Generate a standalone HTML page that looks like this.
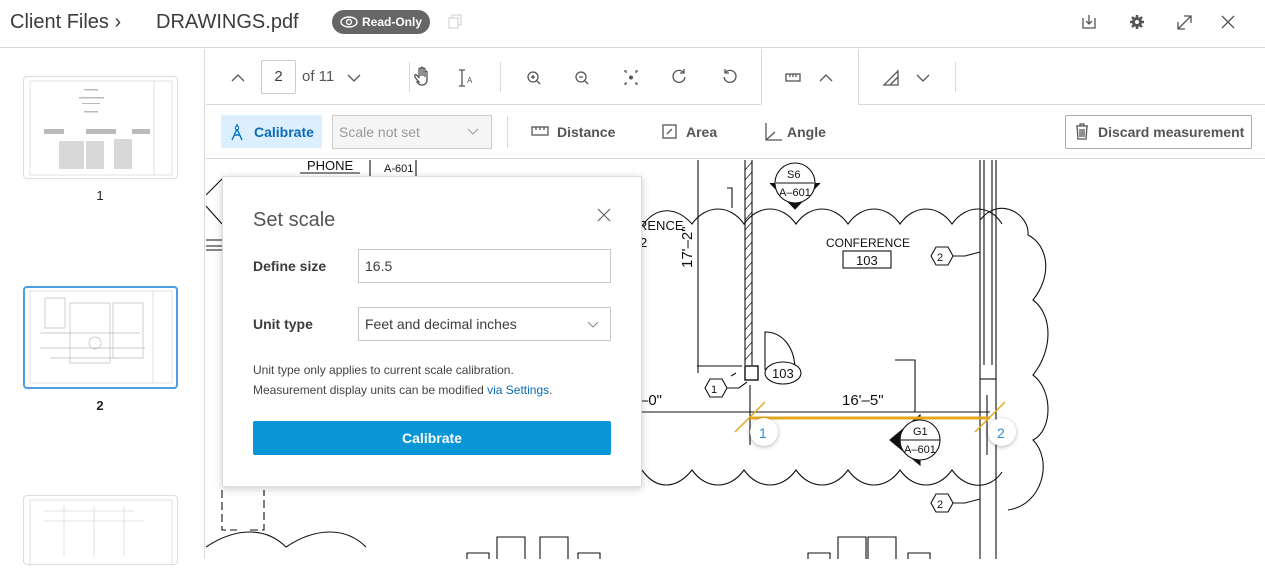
<!DOCTYPE html>
<html><head><meta charset="utf-8"><style>
*{box-sizing:border-box;margin:0;padding:0}
body{width:1265px;height:559px;overflow:hidden;background:#fff;font-family:"Liberation Sans",sans-serif;color:#3c3c3c;position:relative}
.abs{position:absolute}
.hdr{left:0;top:0;width:1265px;height:48px;border-bottom:1px solid #d9d9d9}
.t{font-size:20px;color:#3c3c3c;top:11px}
.badge{left:332px;top:10px;width:98px;height:24px;border-radius:12px;background:#666;color:#fff;font-size:12px;font-weight:bold;line-height:24px;padding-left:30px}
.side{left:0;top:49px;width:205px;height:510px;border-right:1px solid #d9d9d9}
.thumb{left:23px;width:155px;border:1px solid #ddd;border-radius:4px;background:#fff}
.lbl{font-size:13px;color:#222;width:200px;text-align:center}
.line{background:#d9d9d9}
.ic{stroke:#555;fill:none;stroke-width:1.3}
.btn{font-size:14px;font-weight:bold;color:#555;top:124px}
.dlg{left:222px;top:176px;width:420px;height:311px;background:#fff;border:1px solid #ddd;box-shadow:0 2px 8px rgba(0,0,0,.2)}
.inp{border:1px solid #c8c8c8;height:34px;font-size:14px;line-height:32px;padding-left:6px;color:#3c3c3c}
</style></head><body>
<div class="abs hdr"></div>
<div class="abs t" style="left:10px">Client Files ›</div>
<div class="abs t" style="left:156px">DRAWINGS.pdf</div>
<div class="abs badge">Read-Only</div>
<svg class="abs" style="left:340px;top:14px" width="20" height="16"><ellipse cx="9" cy="8" rx="8" ry="5" stroke="#fff" fill="none" stroke-width="1.4"/><circle cx="9" cy="8" r="2.5" fill="none" stroke="#fff" stroke-width="1.4"/></svg>
<svg class="abs" style="left:447px;top:14px" width="16" height="16"><rect x="2" y="4" width="9" height="10" stroke="#ccc" fill="none"/><path d="M5 4V1h9v10h-3" stroke="#ccc" fill="none"/></svg>
<svg class="abs" style="left:1080px;top:12px" width="170" height="22">
<path class="ic" d="M3 6v10h12V6M9 3v9M6 9l3 3 3-3"/>
<path d="M57 3v14M50 10h14M52 5l10 10M62 5L52 15" stroke="#555" stroke-width="2.5"/><circle cx="57" cy="10" r="5" fill="#555"/><circle cx="57" cy="10" r="2" fill="#fff"/>
<path class="ic" d="M98 17L111 4M104 4h7v7M98 10v7h7"/>
<path class="ic" d="M142 4l12 12M154 4l-12 12"/>
</svg>
<div class="abs side"></div>
<div class="abs thumb" style="top:76px;height:103px"><svg width="153" height="101"><g stroke="#ccc" fill="none" stroke-width=".6"><rect x="6" y="4" width="142" height="94"/><line x1="130" y1="4" x2="130" y2="98"/></g><g fill="#bbb"><rect x="60" y="12" width="14" height="1.5"/><rect x="55" y="20" width="25" height="1.5"/><rect x="58" y="26" width="18" height="1"/><rect x="60" y="34" width="14" height="1.5"/><rect x="20" y="52" width="20" height="5"/><rect x="62" y="52" width="30" height="5"/><rect x="108" y="52" width="18" height="5"/></g><g fill="#d8d8d8"><rect x="35" y="64" width="25" height="28"/><rect x="62" y="64" width="18" height="28"/><rect x="90" y="62" width="18" height="30"/></g></svg></div>
<div class="abs lbl" style="left:0;top:188px">1</div>
<div class="abs thumb" style="top:286px;height:103px;border:2px solid #4b9ee4"><svg width="151" height="99"><g stroke="#ccc" fill="none" stroke-width=".6"><rect x="5" y="3" width="142" height="92"/><line x1="128" y1="3" x2="128" y2="95"/></g><g stroke="#bbb" fill="none" stroke-width=".7"><rect x="20" y="10" width="20" height="30"/><rect x="45" y="15" width="40" height="60"/><rect x="88" y="15" width="30" height="55"/><path d="M15 45h100M15 60h105M25 70h70"/><circle cx="70" cy="55" r="6"/></g></svg></div>
<div class="abs lbl" style="left:0;top:398px;font-weight:bold">2</div>
<div class="abs thumb" style="top:495px;height:70px"><svg width="153" height="70"><g stroke="#ccc" fill="none" stroke-width=".6"><rect x="6" y="4" width="142" height="70"/><path d="M20 15h90M20 25h100M40 10v50M70 10v50M100 10v50"/></g></svg></div>

<div class="abs line" style="left:206px;top:104px;width:555px;height:1px"></div>
<div class="abs line" style="left:858px;top:104px;width:407px;height:1px"></div>
<div class="abs line" style="left:761px;top:49px;width:1px;height:55px"></div>
<div class="abs line" style="left:858px;top:49px;width:1px;height:55px"></div>
<div class="abs line" style="left:409px;top:62px;width:1px;height:30px"></div>
<div class="abs line" style="left:500px;top:62px;width:1px;height:30px"></div>
<div class="abs line" style="left:955px;top:62px;width:1px;height:30px"></div>
<div class="abs" style="left:261px;top:60px;width:35px;height:34px;border:1px solid #ccc;border-radius:2px;font-size:15px;text-align:center;line-height:32px">2</div>
<div class="abs" style="left:302px;top:68px;font-size:15px;color:#555">of 11</div>
<svg class="abs" style="left:225px;top:64px" width="740" height="28">
<path class="ic" stroke-width="1.6" d="M7 17l6-6 6 6M123 11l6 6 6-6"/>
<path class="ic" d="M194 18c-3-3-5-6-4-7 1-1 3 1 4 3V5c0-1 2-1 2 0v7-8c0-1 2-1 2 0v8-7c0-1 2-1 2 0v8-5c0-1 2-1 2 0v8c0 3-2 5-5 5s-3-1-5-3z"/>
<path class="ic" d="M234 6h6M237 6v16M234 22h6"/><text x="242" y="19" font-size="8" fill="#555">A</text>
<circle class="ic" cx="308" cy="13" r="5"/><path class="ic" d="M312 17l3 3M306 13h4M308 11v4"/>
<circle class="ic" cx="356" cy="13" r="5"/><path class="ic" d="M360 17l3 3M354 13h4"/>
<path class="ic" d="M399 7h2v2M413 7h-2v2M399 20h2v-2M413 20h-2v-2"/><circle cx="406" cy="13.5" r="2" fill="#555"/>
<path class="ic" d="M459 9a6 6 0 1 0 1 4M459 5v4h-4"/>
<path class="ic" d="M500 9a6 6 0 1 1-1 4M500 5v4h4"/>
<rect class="ic" x="561" y="10" width="14" height="7"/><path class="ic" d="M565 10v3M568 10v3M571 10v3"/>
<path class="ic" stroke-width="1.6" d="M595 17l6-6 6 6"/>
<path class="ic" d="M659 21l14-14v14z M665 21l8-8"/><path class="ic" d="M692 11l6 6 6-6"/>
</svg>
<div class="abs line" style="left:206px;top:158px;width:1059px;height:1px"></div>
<div class="abs" style="left:221px;top:115px;width:101px;height:33px;background:#dcefff;border-radius:2px"></div>
<svg class="abs" style="left:228px;top:121px" width="20" height="22"><path d="M9 3v3M9 8L4 19M9 8l5 11M6 14h6" stroke="#0070c0" fill="none" stroke-width="1.4"/><circle cx="9" cy="7" r="1.8" fill="none" stroke="#0070c0"/></svg>
<div class="abs btn" style="left:254px;color:#0a6cb5">Calibrate</div>
<div class="abs" style="left:332px;top:115px;width:160px;height:34px;border:1px solid #ccc;background:#f5f5f5;font-size:14px;color:#999;line-height:32px;padding-left:6px">Scale not set</div>
<svg class="abs" style="left:467px;top:128px" width="12" height="8"><path d="M1 1l5 5 5-5" stroke="#999" fill="none"/></svg>
<div class="abs line" style="left:507px;top:116px;width:1px;height:32px"></div>
<svg class="abs" style="left:530px;top:120px" width="300" height="24">
<rect class="ic" x="2" y="7" width="16" height="8"/><path class="ic" d="M6 7v3M10 7v3M14 7v3"/>
<rect class="ic" x="133" y="5" width="13" height="13"/><path class="ic" d="M137 14l5-5"/>
<path class="ic" d="M236 3v17h16M236 20l9-8"/>
</svg>
<div class="abs btn" style="left:557px">Distance</div>
<div class="abs btn" style="left:686px">Area</div>
<div class="abs btn" style="left:787px">Angle</div>
<div class="abs" style="left:1065px;top:115px;width:187px;height:34px;border:1px solid #aaa;border-radius:2px;font-size:14px;font-weight:bold;color:#555;line-height:32px;padding-left:32px">Discard measurement</div>
<svg class="abs" style="left:1074px;top:123px" width="16" height="18"><path class="ic" d="M2 3h12M6 3V1h4v2M3 3l1 13h8l1-13M6 6v8M8 6v8M10 6v8"/></svg>

<svg class="abs" style="left:206px;top:159px" width="1059" height="400">
<g stroke="#111" fill="none" stroke-width="1.1" transform="translate(-206,-159)">
<path d="M206 195l16-16M206 206l16 18M222 240h-16M206 246h16M206 250h16"/>
<path d="M300 173h60M370 160v16M416 160v16"/>
<path d="M698 160v213"/>
<path d="M745 160v205M752 160v205"/>
<path d="M745 170l7-8M745 180l7-8M745 190l7-8M745 200l7-8M745 210l7-8M745 220l7-8M745 230l7-8M745 240l7-8M745 250l7-8M745 260l7-8M745 270l7-8M745 280l7-8M745 290l7-8M745 300l7-8M745 310l7-8M745 320l7-8M745 330l7-8M745 340l7-8M745 350l7-8M745 360l7-8" stroke-width=".7"/>
<path d="M727 188h5v20"/>
<path d="M642 226c14-20 34-20 50-2c14-20 38-20 52 0c14-20 38-20 52 0c14-20 38-20 52 0c14-20 38-20 52 0c14-20 38-20 52 0c14-20 38-20 50 0"/>
<path d="M980 220c20-25 50-5 48 15c20 10 25 40 5 65c20 15 20 50 0 75c20 15 20 55 0 65c20 20 10 65-25 70"/>
<path d="M642 470c14 20 34 20 50 0c14 20 38 20 52 0c14 20 38 20 52 0c14 20 38 20 52 0c14 20 38 20 52 0c14 20 38 20 52 0c14 20 38 20 50 2"/>
<path d="M980 160v399M996 160v399M984 160v205M992 160v205" />
<path d="M980 379h16"/>
<path d="M765 370v-38c18 0 30 16 30 38"/>
<ellipse cx="783" cy="373" rx="18" ry="11" fill="#fff"/>
<rect x="745" y="366" width="13" height="14" fill="#fff" stroke-width="1.4"/>
<path d="M640 412h350M736 373l-5 3M697 366h45"/>
<path d="M895 360h20v52"/>
<path d="M987 395v60M750 385v60"/>
<path d="M705 388l5-9h12l5 9-5 9h-12zM727 388h12l8-6"/>
<path d="M931 256l5-9h12l5 9-5 9h-12zM953 256h12l15-4"/>
<path d="M931 503l5-9h12l5 9-5 9h-12zM953 503h12l15-4"/>
<rect x="843" y="251" width="48" height="17"/>
<path d="M770 183l25 26 25-26" fill="#111"/>
<circle cx="795" cy="183" r="20" fill="#fff"/><path d="M776 183h38"/>
<path d="M920 415l-30 25 30 25z" fill="#111"/>
<circle cx="920" cy="440" r="20" fill="#fff"/><path d="M900 440h40"/>
<path d="M222 490v40h15M250 530h14v-40" stroke-dasharray="8 4"/>
<path d="M206 547c30-20 60-20 80 0c30-20 60-20 80 0"/>
<path d="M497 559v-22h28v22M540 559v-22h28v22M838 559v-22h28v22M868 559v-22h28v22"/>
<path d="M467 559v-6h22v6M578 559v-6h22v6M808 559v-6h22v6M908 559v-6h22v6"/>
</g>
<g font-family="Liberation Sans" font-size="13" fill="#111" transform="translate(-206,-159)">
<text x="307" y="170">PHONE</text><text x="384" y="172" font-size="11">A-601</text>
<text x="638" y="230">RENCE</text><text x="640" y="247">2</text>
<text x="826" y="247" font-size="12">CONFERENCE</text><text x="856" y="265">103</text>
<text x="772" y="378">103</text>
<text x="842" y="405" font-size="15">16'–5"</text><text x="640" y="405" font-size="15">–0"</text>
<text x="711" y="393" font-size="11">1</text><text x="937" y="261" font-size="11">2</text><text x="937" y="508" font-size="11">2</text>
<text x="787" y="178" font-size="11">S6</text><text x="779" y="196" font-size="11">A–601</text>
<text x="913" y="435" font-size="11">G1</text><text x="904" y="453" font-size="11">A–601</text>
<text transform="translate(692,268) rotate(-90)" font-size="15">17'–2"</text>
</g>
<g transform="translate(-206,-159)">
<line x1="750" y1="418" x2="990" y2="418" stroke="#e3a81f" stroke-width="3"/>
<path d="M735 432l30-30M975 432l30-30" stroke="#e3a81f" stroke-width="1.5"/>
<circle cx="764" cy="432" r="14" fill="#fff" style="filter:drop-shadow(0 1px 2px rgba(0,0,0,.3))"/>
<circle cx="1002" cy="432" r="14" fill="#fff" style="filter:drop-shadow(0 1px 2px rgba(0,0,0,.3))"/>
<text x="759" y="438" font-size="14" fill="#2a8ed6" font-family="Liberation Sans">1</text>
<text x="997" y="438" font-size="14" fill="#2a8ed6" font-family="Liberation Sans">2</text>
</g>
</svg>

<div class="abs dlg">
<div class="abs" style="left:30px;top:32px;font-size:20px;color:#555">Set scale</div>
<svg class="abs" style="left:374px;top:31px" width="14" height="14"><path d="M1 1l12 12M13 1L1 13" stroke="#666" stroke-width="1.2"/></svg>
<div class="abs" style="left:30px;top:81px;font-size:14px;font-weight:bold;color:#3c3c3c">Define size</div>
<div class="abs inp" style="left:135px;top:72px;width:253px">16.5</div>
<div class="abs" style="left:30px;top:139px;font-size:14px;font-weight:bold;color:#3c3c3c">Unit type</div>
<div class="abs inp" style="left:135px;top:130px;width:253px">Feet and decimal inches</div>
<svg class="abs" style="left:364px;top:144px" width="12" height="8"><path d="M1 1l5 5 5-5" stroke="#888" fill="none"/></svg>
<div class="abs" style="left:30px;top:183px;font-size:12px;line-height:20px;color:#444;width:380px">Unit type only applies to current scale calibration.<br>Measurement display units can be modified <span style="color:#0a6cb5">via Settings</span>.</div>
<div class="abs" style="left:30px;top:244px;width:358px;height:34px;background:#0996d7;border-radius:2px;color:#fff;font-size:14px;font-weight:bold;text-align:center;line-height:34px">Calibrate</div>
</div>
</body></html>
